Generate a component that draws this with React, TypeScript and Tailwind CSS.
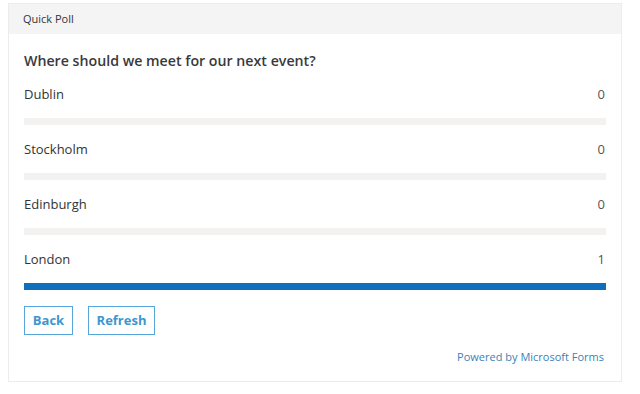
import React from 'react';

const options = [
  { name: 'Dublin', votes: 0 },
  { name: 'Stockholm', votes: 0 },
  { name: 'Edinburgh', votes: 0 },
  { name: 'London', votes: 1 },
];

export default function App() {
  const total = options.reduce((s, o) => s + o.votes, 0);

  return (
    <div className="w-[640px] h-[394px] bg-white pt-[3px] pl-[8px]" style={{ fontFamily: '"Open Sans", "Noto Sans", sans-serif' }}>
      <div className="w-[614px] h-[379px] border border-[#ececec] flex flex-col">
        {/* Header */}
        <div className="h-[30px] bg-[#f4f4f4] flex items-center px-[14px] text-[11px] text-[#333]">
          Quick Poll
        </div>

        <div className="flex flex-col px-[15px] pt-[17px]">
          <h2 className="text-[14.2px] leading-[20px] font-semibold text-[#3a3a3a]">
            Where should we meet for our next event?
          </h2>

          <div className="mt-[13px] flex flex-col">
            {options.map((o) => {
              const pct = total ? (o.votes / total) * 100 : 0;
              return (
                <div key={o.name} className="mb-[14px] last:mb-0">
                  <div className="flex justify-between items-center text-[13px] leading-[20px] text-[#333]">
                    <span>{o.name}</span>
                    <span className="text-[#555] pr-[1px]">{o.votes}</span>
                  </div>
                  <div className="mt-[14px] h-[7px] bg-[#f3f2f1]">
                    <div className="h-full bg-[#106ebe]" style={{ width: `${pct}%` }} />
                  </div>
                </div>
              );
            })}
          </div>

          {/* Buttons */}
          <div className="mt-[16px] flex gap-[15px]">
            <button className="h-[29px] w-[49px] border border-[#56a6dc] text-[#3d96d1] text-[13px] font-bold pt-[1px]">
              Back
            </button>
            <button className="h-[29px] w-[67px] border border-[#56a6dc] text-[#3d96d1] text-[13px] font-bold pt-[1px]">
              Refresh
            </button>
          </div>

          <div className="mt-[14px] flex justify-end pr-[2px] text-[11px] text-[#3a83b6]">
            Powered by Microsoft Forms
          </div>
        </div>
      </div>
    </div>
  );
}
